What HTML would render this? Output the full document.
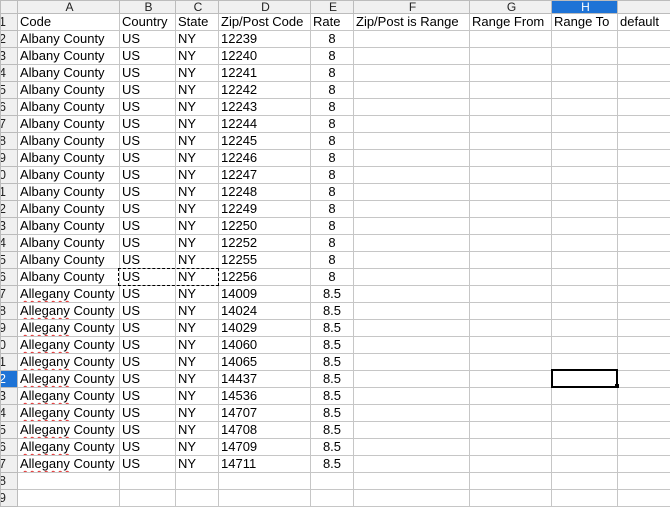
<!DOCTYPE html>
<html><head><meta charset="utf-8"><style>
body{margin:0;width:670px;height:500px;overflow:hidden;background:#fff;font-family:"Liberation Sans",sans-serif;}
table{position:absolute;left:0;top:0;border-collapse:collapse;table-layout:fixed;width:730px;font-size:13px;color:#000}
td{border:1px solid #c6c6c6;height:16px;padding:0 0 0 2px;white-space:nowrap;overflow:hidden;line-height:16px}
tr.h td{height:12px;line-height:12px;background:#f0f0f0;text-align:center;font-size:12px;color:#222;border-color:#bcbcbc}
td.r{background:#f0f0f0;position:relative;border-color:#bcbcbc;padding:0;font-size:12.5px;color:#222}
td.r span{position:absolute;right:11px;top:0}
td.n{text-align:center;padding:0}
td.sel{background:#1e73d6 !important;color:#fff !important}
.sp{text-decoration:underline wavy #e03030;text-decoration-thickness:1px;text-decoration-skip-ink:none;text-underline-offset:2px}
#dash{position:absolute;left:118px;top:268px;width:99px;height:16px;border:1px dashed #000}
#act{position:absolute;left:551px;top:369px;width:63px;height:15px;border:2px solid #000}
#hd{position:absolute;left:615px;top:384px;width:4px;height:4px;background:#000}
</style></head><body>
<table>
<colgroup><col style="width:17px"><col style="width:102px"><col style="width:56px"><col style="width:43px"><col style="width:92px"><col style="width:43px"><col style="width:116px"><col style="width:82px"><col style="width:66px"><col style="width:113px"></colgroup>
<tr class="h"><td></td><td>A</td><td>B</td><td>C</td><td>D</td><td>E</td><td>F</td><td>G</td><td class="sel">H</td><td>I</td></tr>
<tr><td class="r"><span>1</span></td><td>Code</td><td>Country</td><td>State</td><td>Zip/Post Code</td><td>Rate</td><td>Zip/Post is Range</td><td>Range From</td><td>Range To</td><td>default</td></tr>
<tr><td class="r"><span>2</span></td><td>Albany County</td><td>US</td><td>NY</td><td>12239</td><td class="n">8</td><td></td><td></td><td></td><td></td></tr>
<tr><td class="r"><span>3</span></td><td>Albany County</td><td>US</td><td>NY</td><td>12240</td><td class="n">8</td><td></td><td></td><td></td><td></td></tr>
<tr><td class="r"><span>4</span></td><td>Albany County</td><td>US</td><td>NY</td><td>12241</td><td class="n">8</td><td></td><td></td><td></td><td></td></tr>
<tr><td class="r"><span>5</span></td><td>Albany County</td><td>US</td><td>NY</td><td>12242</td><td class="n">8</td><td></td><td></td><td></td><td></td></tr>
<tr><td class="r"><span>6</span></td><td>Albany County</td><td>US</td><td>NY</td><td>12243</td><td class="n">8</td><td></td><td></td><td></td><td></td></tr>
<tr><td class="r"><span>7</span></td><td>Albany County</td><td>US</td><td>NY</td><td>12244</td><td class="n">8</td><td></td><td></td><td></td><td></td></tr>
<tr><td class="r"><span>8</span></td><td>Albany County</td><td>US</td><td>NY</td><td>12245</td><td class="n">8</td><td></td><td></td><td></td><td></td></tr>
<tr><td class="r"><span>9</span></td><td>Albany County</td><td>US</td><td>NY</td><td>12246</td><td class="n">8</td><td></td><td></td><td></td><td></td></tr>
<tr><td class="r"><span>0</span></td><td>Albany County</td><td>US</td><td>NY</td><td>12247</td><td class="n">8</td><td></td><td></td><td></td><td></td></tr>
<tr><td class="r"><span>1</span></td><td>Albany County</td><td>US</td><td>NY</td><td>12248</td><td class="n">8</td><td></td><td></td><td></td><td></td></tr>
<tr><td class="r"><span>2</span></td><td>Albany County</td><td>US</td><td>NY</td><td>12249</td><td class="n">8</td><td></td><td></td><td></td><td></td></tr>
<tr><td class="r"><span>3</span></td><td>Albany County</td><td>US</td><td>NY</td><td>12250</td><td class="n">8</td><td></td><td></td><td></td><td></td></tr>
<tr><td class="r"><span>4</span></td><td>Albany County</td><td>US</td><td>NY</td><td>12252</td><td class="n">8</td><td></td><td></td><td></td><td></td></tr>
<tr><td class="r"><span>5</span></td><td>Albany County</td><td>US</td><td>NY</td><td>12255</td><td class="n">8</td><td></td><td></td><td></td><td></td></tr>
<tr><td class="r"><span>6</span></td><td>Albany County</td><td>US</td><td>NY</td><td>12256</td><td class="n">8</td><td></td><td></td><td></td><td></td></tr>
<tr><td class="r"><span>7</span></td><td><span class="sp">Allegany</span> County</td><td>US</td><td>NY</td><td>14009</td><td class="n">8.5</td><td></td><td></td><td></td><td></td></tr>
<tr><td class="r"><span>8</span></td><td><span class="sp">Allegany</span> County</td><td>US</td><td>NY</td><td>14024</td><td class="n">8.5</td><td></td><td></td><td></td><td></td></tr>
<tr><td class="r"><span>9</span></td><td><span class="sp">Allegany</span> County</td><td>US</td><td>NY</td><td>14029</td><td class="n">8.5</td><td></td><td></td><td></td><td></td></tr>
<tr><td class="r"><span>0</span></td><td><span class="sp">Allegany</span> County</td><td>US</td><td>NY</td><td>14060</td><td class="n">8.5</td><td></td><td></td><td></td><td></td></tr>
<tr><td class="r"><span>1</span></td><td><span class="sp">Allegany</span> County</td><td>US</td><td>NY</td><td>14065</td><td class="n">8.5</td><td></td><td></td><td></td><td></td></tr>
<tr><td class="r sel"><span>2</span></td><td><span class="sp">Allegany</span> County</td><td>US</td><td>NY</td><td>14437</td><td class="n">8.5</td><td></td><td></td><td></td><td></td></tr>
<tr><td class="r"><span>3</span></td><td><span class="sp">Allegany</span> County</td><td>US</td><td>NY</td><td>14536</td><td class="n">8.5</td><td></td><td></td><td></td><td></td></tr>
<tr><td class="r"><span>4</span></td><td><span class="sp">Allegany</span> County</td><td>US</td><td>NY</td><td>14707</td><td class="n">8.5</td><td></td><td></td><td></td><td></td></tr>
<tr><td class="r"><span>5</span></td><td><span class="sp">Allegany</span> County</td><td>US</td><td>NY</td><td>14708</td><td class="n">8.5</td><td></td><td></td><td></td><td></td></tr>
<tr><td class="r"><span>6</span></td><td><span class="sp">Allegany</span> County</td><td>US</td><td>NY</td><td>14709</td><td class="n">8.5</td><td></td><td></td><td></td><td></td></tr>
<tr><td class="r"><span>7</span></td><td><span class="sp">Allegany</span> County</td><td>US</td><td>NY</td><td>14711</td><td class="n">8.5</td><td></td><td></td><td></td><td></td></tr>
<tr><td class="r"><span>8</span></td><td></td><td></td><td></td><td></td><td></td><td></td><td></td><td></td><td></td></tr>
<tr><td class="r"><span>9</span></td><td></td><td></td><td></td><td></td><td></td><td></td><td></td><td></td><td></td></tr>
</table>
<div id="dash"></div><div id="act"></div><div id="hd"></div>
</body></html>
